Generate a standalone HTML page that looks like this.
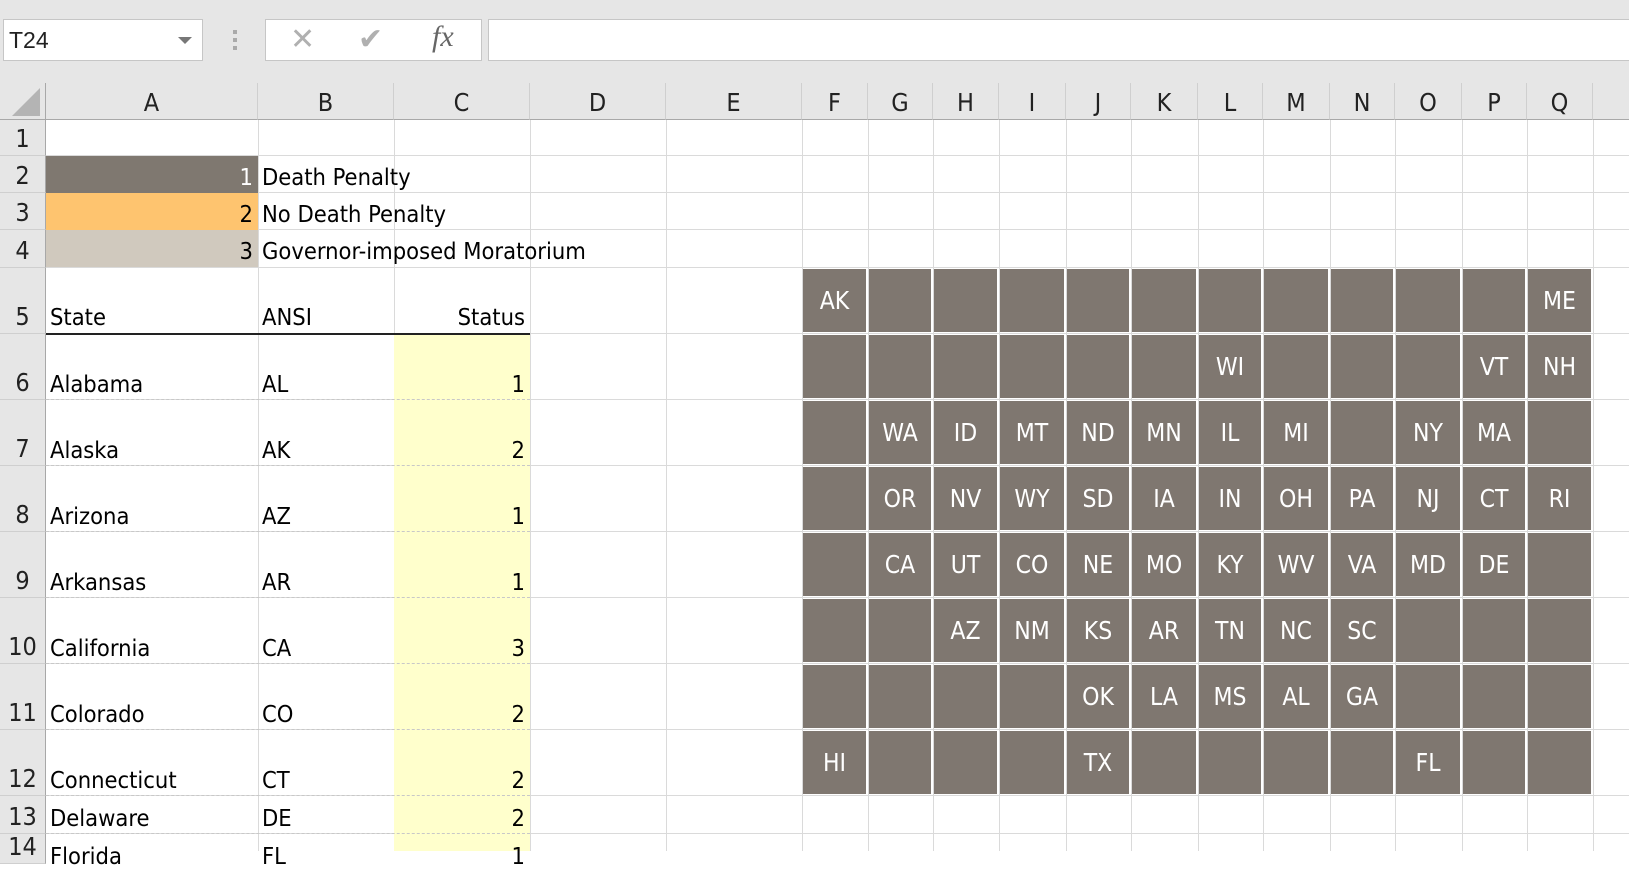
<!DOCTYPE html>
<html><head><meta charset="utf-8"><style>
*{margin:0;padding:0;box-sizing:border-box}
body{width:1629px;height:851px;overflow:hidden;background:#fff;position:relative;font-family:"DejaVu Sans Condensed","Liberation Sans Narrow","Liberation Sans",sans-serif;color:#000}
.a{position:absolute}
.top{left:0;top:0;width:1629px;height:83px;background:#e6e6e6}
.box{background:#fff;border:1px solid #c6c6c6}
.ch{top:83px;height:37px;background:#e6e6e6;border-right:1px solid #cfcfcf;border-bottom:1px solid #a8a8a8;text-align:center;font-size:25px;line-height:40px;color:#222}
.rh{left:0;width:46px;background:#e6e6e6;border-bottom:1px solid #cfcfcf;border-right:1px solid #a8a8a8;font-size:25px;color:#222;text-align:center;display:flex;align-items:flex-end;justify-content:center;padding-bottom:2px}
.vl{top:120px;width:1px;height:731px;background:#dadada}
.hl{left:46px;width:1583px;height:1px;background:#dadada}
.c{font-size:23.5px;display:flex;align-items:flex-end;padding:0 5px 2px 4px;white-space:nowrap}
.r{justify-content:flex-end}
.t{background:#7f7770;color:#fff;font-size:24.5px;display:flex;align-items:center;justify-content:center}
</style></head><body>
<div class="a top"></div>
<div class="a box" style="left:3px;top:19px;width:200px;height:42px;font-size:23px;line-height:40px;padding-left:5px;font-family:'Liberation Sans',sans-serif;color:#222">T24</div>
<div class="a" style="left:178px;top:37px;width:0;height:0;border-left:7px solid transparent;border-right:7px solid transparent;border-top:7px solid #777"></div>
<div class="a" style="left:233px;top:30px;width:4px;height:4px;background:#aaa;box-shadow:0 8px 0 #aaa,0 16px 0 #aaa"></div>
<div class="a box" style="left:265px;top:19px;width:217px;height:42px"></div>
<div class="a" style="left:290px;top:22px;font-size:30px;color:#b0b0b0;font-family:'DejaVu Sans',sans-serif">✕</div>
<div class="a" style="left:358px;top:22px;font-size:30px;color:#b0b0b0;font-family:'DejaVu Sans',sans-serif">✔</div>
<div class="a" style="left:432px;top:20px;font-size:30px;color:#666;font-style:italic;font-family:'Liberation Serif',serif">fx</div>
<div class="a box" style="left:488px;top:19px;width:1150px;height:42px"></div>

<div class="a" style="left:0;top:83px;width:46px;height:37px;background:#e6e6e6;border-right:1px solid #a8a8a8;border-bottom:1px solid #a8a8a8"></div>
<div class="a" style="left:12px;top:88px;width:0;height:0;border-left:28px solid transparent;border-bottom:28px solid #b4b4b4"></div>
<div class="a ch" style="left:46px;width:212px">A</div>
<div class="a ch" style="left:258px;width:136px">B</div>
<div class="a ch" style="left:394px;width:136px">C</div>
<div class="a ch" style="left:530px;width:136px">D</div>
<div class="a ch" style="left:666px;width:136px">E</div>
<div class="a ch" style="left:802px;width:66px">F</div>
<div class="a ch" style="left:868px;width:65px">G</div>
<div class="a ch" style="left:933px;width:66px">H</div>
<div class="a ch" style="left:999px;width:67px">I</div>
<div class="a ch" style="left:1066px;width:65px">J</div>
<div class="a ch" style="left:1131px;width:67px">K</div>
<div class="a ch" style="left:1198px;width:65px">L</div>
<div class="a ch" style="left:1263px;width:67px">M</div>
<div class="a ch" style="left:1330px;width:65px">N</div>
<div class="a ch" style="left:1395px;width:67px">O</div>
<div class="a ch" style="left:1462px;width:65px">P</div>
<div class="a ch" style="left:1527px;width:66px">Q</div>
<div class="a ch" style="left:1593px;width:40px;border-right:none"></div>

<div class="a rh" style="top:120px;height:36px">1</div>
<div class="a rh" style="top:156px;height:37px">2</div>
<div class="a rh" style="top:193px;height:37px">3</div>
<div class="a rh" style="top:230px;height:38px">4</div>
<div class="a rh" style="top:268px;height:66px">5</div>
<div class="a rh" style="top:334px;height:66px">6</div>
<div class="a rh" style="top:400px;height:66px">7</div>
<div class="a rh" style="top:466px;height:66px">8</div>
<div class="a rh" style="top:532px;height:66px">9</div>
<div class="a rh" style="top:598px;height:66px">10</div>
<div class="a rh" style="top:664px;height:66px">11</div>
<div class="a rh" style="top:730px;height:66px">12</div>
<div class="a rh" style="top:796px;height:38px">13</div>
<div class="a rh" style="top:834px;height:30px">14</div>

<div class="a vl" style="left:258px"></div><div class="a vl" style="left:394px"></div><div class="a vl" style="left:530px"></div><div class="a vl" style="left:666px"></div><div class="a vl" style="left:802px"></div><div class="a vl" style="left:868px"></div><div class="a vl" style="left:933px"></div><div class="a vl" style="left:999px"></div><div class="a vl" style="left:1066px"></div><div class="a vl" style="left:1131px"></div><div class="a vl" style="left:1198px"></div><div class="a vl" style="left:1263px"></div><div class="a vl" style="left:1330px"></div><div class="a vl" style="left:1395px"></div><div class="a vl" style="left:1462px"></div><div class="a vl" style="left:1527px"></div><div class="a vl" style="left:1593px"></div>
<div class="a hl" style="top:155px"></div><div class="a hl" style="top:192px"></div><div class="a hl" style="top:229px"></div><div class="a hl" style="top:267px"></div><div class="a hl" style="top:333px"></div><div class="a hl" style="top:399px"></div><div class="a hl" style="top:465px"></div><div class="a hl" style="top:531px"></div><div class="a hl" style="top:597px"></div><div class="a hl" style="top:663px"></div><div class="a hl" style="top:729px"></div><div class="a hl" style="top:795px"></div><div class="a hl" style="top:833px"></div>

<div class="a" style="left:394px;top:334px;width:136px;height:517px;background:#ffffcc"></div>
<div class="a" style="left:46px;top:399px;width:484px;border-top:1px dashed #c8c8c8"></div>
<div class="a" style="left:46px;top:465px;width:484px;border-top:1px dashed #c8c8c8"></div>
<div class="a" style="left:46px;top:531px;width:484px;border-top:1px dashed #c8c8c8"></div>
<div class="a" style="left:46px;top:597px;width:484px;border-top:1px dashed #c8c8c8"></div>
<div class="a" style="left:46px;top:663px;width:484px;border-top:1px dashed #c8c8c8"></div>
<div class="a" style="left:46px;top:729px;width:484px;border-top:1px dashed #c8c8c8"></div>
<div class="a" style="left:46px;top:795px;width:484px;border-top:1px dashed #c8c8c8"></div>
<div class="a" style="left:46px;top:833px;width:484px;border-top:1px dashed #c8c8c8"></div>
<div class="a" style="left:46px;top:333px;width:484px;height:2px;background:#222"></div>

<div class="a c r" style="left:46px;top:156px;width:212px;height:37px;background:#7f7870;color:#fff">1</div>
<div class="a c" style="left:258px;top:156px;height:37px">Death Penalty</div>
<div class="a c r" style="left:46px;top:193px;width:212px;height:37px;background:#fec46f">2</div>
<div class="a c" style="left:258px;top:193px;height:37px">No Death Penalty</div>
<div class="a c r" style="left:46px;top:230px;width:212px;height:37px;background:#d0c9be">3</div>
<div class="a c" style="left:258px;top:230px;height:37px">Governor-imposed Moratorium</div>

<div class="a c" style="left:46px;top:268px;height:65px">State</div>
<div class="a c" style="left:258px;top:268px;height:65px">ANSI</div>
<div class="a c r" style="left:394px;top:268px;width:136px;height:65px">Status</div>

<div class="a c" style="left:46px;top:334px;height:66px">Alabama</div><div class="a c" style="left:258px;top:334px;height:66px">AL</div><div class="a c r" style="left:394px;top:334px;width:136px;height:66px">1</div>
<div class="a c" style="left:46px;top:400px;height:66px">Alaska</div><div class="a c" style="left:258px;top:400px;height:66px">AK</div><div class="a c r" style="left:394px;top:400px;width:136px;height:66px">2</div>
<div class="a c" style="left:46px;top:466px;height:66px">Arizona</div><div class="a c" style="left:258px;top:466px;height:66px">AZ</div><div class="a c r" style="left:394px;top:466px;width:136px;height:66px">1</div>
<div class="a c" style="left:46px;top:532px;height:66px">Arkansas</div><div class="a c" style="left:258px;top:532px;height:66px">AR</div><div class="a c r" style="left:394px;top:532px;width:136px;height:66px">1</div>
<div class="a c" style="left:46px;top:598px;height:66px">California</div><div class="a c" style="left:258px;top:598px;height:66px">CA</div><div class="a c r" style="left:394px;top:598px;width:136px;height:66px">3</div>
<div class="a c" style="left:46px;top:664px;height:66px">Colorado</div><div class="a c" style="left:258px;top:664px;height:66px">CO</div><div class="a c r" style="left:394px;top:664px;width:136px;height:66px">2</div>
<div class="a c" style="left:46px;top:730px;height:66px">Connecticut</div><div class="a c" style="left:258px;top:730px;height:66px">CT</div><div class="a c r" style="left:394px;top:730px;width:136px;height:66px">2</div>
<div class="a c" style="left:46px;top:796px;height:38px">Delaware</div><div class="a c" style="left:258px;top:796px;height:38px">DE</div><div class="a c r" style="left:394px;top:796px;width:136px;height:38px">2</div>
<div class="a c" style="left:46px;top:834px;height:38px">Florida</div><div class="a c" style="left:258px;top:834px;height:38px">FL</div><div class="a c r" style="left:394px;top:834px;width:136px;height:38px">1</div>

<div id="map"></div>
<script>
var L=[802,868,933,999,1066,1131,1198,1263,1330,1395,1462,1527,1593];
var T=[268,334,400,466,532,598,664,730,796];
var M=[
"AK,,,,,,,,,,,ME",
",,,,,,WI,,,,VT,NH",
",WA,ID,MT,ND,MN,IL,MI,,NY,MA,",
",OR,NV,WY,SD,IA,IN,OH,PA,NJ,CT,RI",
",CA,UT,CO,NE,MO,KY,WV,VA,MD,DE,",
",,AZ,NM,KS,AR,TN,NC,SC,,,",
",,,,OK,LA,MS,AL,GA,,,",
"HI,,,,TX,,,,,FL,,"];
var h="";
for(var r=0;r<8;r++){var s=M[r].split(",");for(var c=0;c<12;c++){
h+='<div class="a t" style="left:'+(L[c]+1)+'px;top:'+(T[r]+1)+'px;width:'+(L[c+1]-L[c]-3)+'px;height:'+(T[r+1]-T[r]-3)+'px">'+(s[c]||"")+'</div>';}}
document.getElementById("map").innerHTML=h;
</script>
</body></html>
